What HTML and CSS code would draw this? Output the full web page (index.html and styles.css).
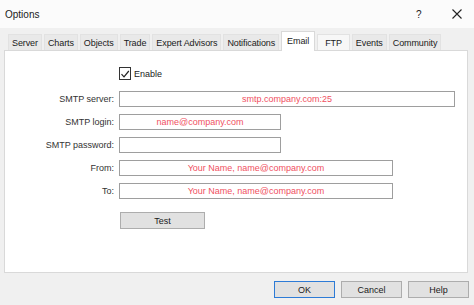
FILE: index.html
```html
<!DOCTYPE html>
<html lang="en">
<head>
    <meta charset="UTF-8">
    <title>Options</title>
    <link rel="stylesheet" href="styles.css">
</head>
<body>
    <div class="titlebar">
        <div class="title">Options</div>
        <div class="help-btn">?</div>
        <div class="close-btn">
            <svg width="10" height="10" viewBox="0 0 10 10"><path d="M0.5 0.5L9.5 9.5M9.5 0.5L0.5 9.5" stroke="#222" stroke-width="1.1"/></svg>
        </div>
    </div>

    <div class="tabs">
        <div class="tab">Server</div>
        <div class="tab">Charts</div>
        <div class="tab">Objects</div>
        <div class="tab">Trade</div>
        <div class="tab">Expert Advisors</div>
        <div class="tab">Notifications</div>
        <div class="tab active">Email</div>
        <div class="tab hover">FTP</div>
        <div class="tab">Events</div>
        <div class="tab">Community</div>
    </div>

    <div class="panel">
        <div class="row check-row">
            <span class="checkbox">
                <svg width="10" height="10" viewBox="0 0 10 10"><path d="M1.5 5.2L4 7.8L8.8 2" fill="none" stroke="#222" stroke-width="1.2"/></svg>
            </span>
            <span>Enable</span>
        </div>
        <div class="row">
            <label>SMTP server:</label>
            <div class="field wide">smtp.company.com:25</div>
        </div>
        <div class="row">
            <label>SMTP login:</label>
            <div class="field short">name@company.com</div>
        </div>
        <div class="row">
            <label>SMTP password:</label>
            <div class="field short"></div>
        </div>
        <div class="row">
            <label>From:</label>
            <div class="field mid">Your Name, name@company.com</div>
        </div>
        <div class="row">
            <label>To:</label>
            <div class="field mid">Your Name, name@company.com</div>
        </div>
        <div class="row test-row">
            <button class="btn test">Test</button>
        </div>
    </div>

    <div class="footer">
        <button class="btn default">OK</button>
        <button class="btn">Cancel</button>
        <button class="btn">Help</button>
    </div>
</body>
</html>
```

FILE: styles.css
```css
body {
    margin: 0;
    background-color: #f0f0f0;
    font-family: "Liberation Sans", Arial, sans-serif;
    font-size: 9px;
    color: #1a1a1a;
    height: 305px;
    overflow: hidden;
}
.titlebar {
    display: flex;
    align-items: center;
    height: 28px;
    background: #fbfbfb;
    padding-left: 5px;
}
.title {
    font-size: 10px;
    flex: 1;
}
.help-btn {
    font-size: 10px;
    width: 10px;
    margin-right: 26px;
}
.close-btn {
    display: flex;
    margin-right: 12px;
}
.tabs {
    display: flex;
    gap: 2px;
    margin-left: 8px;
    margin-top: 5px;
    height: 17px;
    align-items: flex-end;
    position: relative;
    z-index: 1;
    letter-spacing: -0.1px;
}
.tab {
    height: 16px;
    line-height: 16px;
    padding: 0 3px;
    background: #e9e9e9;
    border: 1px solid #e2e2e2;
    border-bottom: none;
    box-sizing: border-box;
}
.tab.active {
    height: 20px;
    line-height: 18px;
    background: #fff;
    border-color: #d9d9d9;
    padding: 0 5px;
    margin-bottom: -1px;
}
.tab.hover {
    background: #f7f7f7;
    padding: 0 7px;
}
.panel {
    margin: 0 6px 0 4px;
    height: 223px;
    box-sizing: border-box;
    background: #fff;
    border: 1px solid #d9d9d9;
    padding-top: 16px;
}
.row {
    display: flex;
    align-items: center;
    height: 16px;
    margin-bottom: 7px;
}
.row label {
    width: 109px;
    text-align: right;
    margin-right: 5px;
    color: #333;
}
.check-row {
    height: 13px;
    padding-left: 114px;
    margin-bottom: 11px;
}
.checkbox {
    width: 12px;
    height: 13px;
    box-sizing: border-box;
    border: 1px solid #333;
    display: flex;
    align-items: center;
    justify-content: center;
    margin-right: 3px;
}
.field {
    height: 16px;
    line-height: 14px;
    box-sizing: border-box;
    border: 1px solid #9e9e9e;
    color: #f0505f;
    text-align: center;
    white-space: nowrap;
}
.wide { width: 336px; }
.short { width: 162px; }
.mid { width: 274px; }
.test-row {
    margin-top: 13px;
    padding-left: 115px;
    height: 17px;
}
.btn {
    font-family: inherit;
    font-size: 9px;
    height: 17px;
    background: #e1e1e1;
    border: 1px solid #adadad;
    color: #1a1a1a;
    padding: 0;
}
.test {
    width: 85px;
}
.footer {
    display: flex;
    justify-content: flex-end;
    gap: 6px;
    margin-top: 8px;
    margin-right: 5px;
}
.footer .btn {
    width: 61px;
}
.btn.default {
    border-color: #2d7bd6;
}
```
